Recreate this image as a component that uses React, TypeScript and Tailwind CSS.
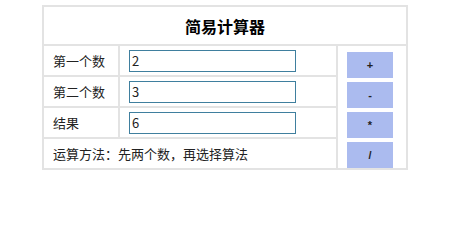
import React, { useState } from 'react';

const rows = [
  { label: '第一个数', key: 'a' },
  { label: '第二个数', key: 'b' },
  { label: '结果', key: 'r' },
] as const;

const App: React.FC = () => {
  const [vals, setVals] = useState<Record<string, string>>({ a: '2', b: '3', r: '6' });

  const calc = (op: string) => {
    const a = parseFloat(vals.a);
    const b = parseFloat(vals.b);
    let r = 0;
    if (op === '+') r = a + b;
    if (op === '-') r = a - b;
    if (op === '*') r = a * b;
    if (op === '/') r = a / b;
    setVals({ ...vals, r: String(r) });
  };

  return (
    <div className="w-[474px] h-[244px] bg-white pt-[5px] pl-[42px] text-[13px] text-[#222]" style={{ fontFamily: '"Noto Sans CJK SC", "Noto Sans", sans-serif' }}>
      <div className="w-[366px] border-2 border-[#e3e3e3]">
        <div className="h-[39px] border-b-2 border-[#e3e3e3] flex items-center justify-center text-[16px] font-bold text-black">简易计算器</div>
        <div className="flex">
          <div className="w-[292px]">
            {rows.map(r => (
              <div key={r.key} className="h-[31px] flex border-b-2 border-[#e3e3e3]">
                <div className="w-[76px] border-r-2 border-[#e3e3e3] pl-[9px] flex items-center">{r.label}</div>
                <div className="flex-1 pl-[9px] flex items-center">
                  <input
                    value={vals[r.key]}
                    onChange={e => setVals({ ...vals, [r.key]: e.target.value })}
                    className="w-[167px] h-[22px] border border-[#3f7f9e] px-[2px] text-[13px] outline-none"
                  />
                </div>
              </div>
            ))}
            <div className="h-[29px] pl-[9px] flex items-center">运算方法：先两个数，再选择算法</div>
          </div>
          <div className="w-[70px] border-l-2 border-[#e3e3e3] pl-[9px] pt-[6px] flex flex-col gap-[4px]">
            {['+', '-', '*', '/'].map(op => (
              <button key={op} onClick={() => calc(op)} className="w-[46px] h-[26px] bg-[#abbbef] text-[11px] font-bold text-[#222] flex items-center justify-center" style={{ fontFamily: '"Liberation Sans", sans-serif' }}>{op}</button>
            ))}
          </div>
        </div>
      </div>
    </div>
  );
};

export default App;
